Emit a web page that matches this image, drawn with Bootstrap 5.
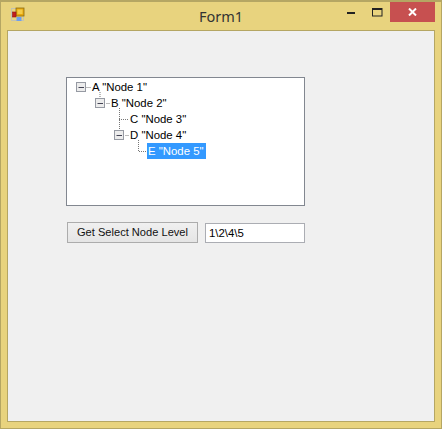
<!DOCTYPE html>
<html lang="en">
<head>
<meta charset="utf-8">
<title>Form1</title>
<link href="https://cdn.jsdelivr.net/npm/bootstrap@5.3.0/dist/css/bootstrap.min.css" rel="stylesheet">
<style>
html,body{background:#fff;margin:0;padding:0}
.winframe{width:442px;height:429px;background:#e8d37e;border:1px solid #b5a663;border-top-width:2px;font-family:"Liberation Sans",Arial,sans-serif;font-size:11.4px;color:#000}
.titlerow{height:28px;padding-left:9px}
.appicon{width:16px;height:16px;margin-top:5px}
.formtitle{left:0;right:0;top:5px;text-align:center;font-family:"Noto Sans",sans-serif;font-size:14.5px;line-height:18px;color:#333;pointer-events:none}
.winbtns{margin-right:6px;height:20px}
.winbtn{width:26px;height:20px;display:flex;align-items:center;justify-content:center}
.closebtn{width:45px;height:20px;background:#c75050;display:flex;align-items:center;justify-content:center}
.clientarea{margin:0 6px 7px 6px;height:392px;background:#f0f0f0;border:1px solid #b5a663;padding:46px 0 0 58px}
.treebox{width:239px;height:129px;background:#fff;border:1px solid #828790;padding-top:1px}
.treeart{left:0;top:0;width:237px;height:127px}
.treerow{height:16px;line-height:16px;white-space:nowrap;padding-left:25px}
.lv2{padding-left:44px}
.lv3{padding-left:63px}
.lv4{padding-left:80px}
.treesel{background:#3399ff;color:#fff;display:inline-block;padding:0 2px 0 1px;height:16px}
.actionrow{margin-top:16px;padding-left:1px;gap:7px}
.getbtn{width:131px;height:21px;padding:0;font-size:11.1px;line-height:19px;color:#111;background:linear-gradient(#f0f0f0,#e5e5e5);border:1px solid #acacac;border-radius:0}
.pathbox{width:100px;height:20px;margin-top:1px;padding:0 3px;font-size:11.4px;line-height:18px;background:#fff;border:1px solid #abadb3;border-radius:0}
</style>
</head>
<body>
<div class="winframe">
  <div class="titlerow d-flex justify-content-between position-relative">
    <svg class="appicon" viewBox="0 0 16 16" aria-hidden="true">
      <rect x="1.500" y="1.500" width="12" height="12" fill="none" stroke="#c2c2b4"/>
      <rect x="6" y="1" width="8" height="8" fill="#e8a80c" stroke="#8a6a12" stroke-width=".8"/>
      <rect x="7.500" y="2.500" width="5" height="4.500" fill="#f4cc48"/>
      <rect x="2.500" y="5" width="3.500" height="5" fill="#c41e1e" stroke="#8d1a1a" stroke-width=".6"/>
      <rect x="6.500" y="10" width="5" height="4" fill="#6f9fec"/>
    </svg>
    <div class="formtitle position-absolute">Form1</div>
    <div class="winbtns d-flex">
      <div class="winbtn">
        <svg width="9" height="3" viewBox="0 0 9 3" aria-hidden="true"><rect width="8" height="2" y="1" fill="#222"/></svg>
      </div>
      <div class="winbtn">
        <svg width="11" height="9" viewBox="0 0 11 9" aria-hidden="true"><rect x=".5" y=".5" width="9.500" height="7.500" fill="none" stroke="#222"/><rect width="10" height="2" fill="#222"/></svg>
      </div>
      <div class="closebtn">
        <svg width="9" height="8" viewBox="0 0 9 8" aria-hidden="true"><path d="M1 .5 8 7.500M8 .5 1 7.500" stroke="#fff" stroke-width="2" fill="none"/></svg>
      </div>
    </div>
  </div>
  <div class="clientarea">
    <div class="treebox position-relative">
      <svg class="treeart position-absolute" viewBox="0 0 237 127" aria-hidden="true">
        <g stroke="#777" stroke-dasharray="1 1" fill="none">
          <path d="M19.500 9.500H24M39.500 25.500H43M58.500 57.500H62M33 14V20M52.500 30V52M52 41.500H62M71.500 62V73.500H80"/>
        </g>
        <g fill="#ececec" stroke="#969aa3">
          <rect x="9.500" y="4.500" width="9" height="9"/>
          <rect x="28.500" y="20.500" width="9" height="9"/>
          <rect x="47.500" y="52.500" width="9" height="9"/>
        </g>
        <g stroke="#445" fill="none">
          <path d="M11.500 9.500H17M30.500 25.500H36M49.500 57.500H55"/>
        </g>
      </svg>
      <div class="treerow position-relative">A "Node 1"</div>
      <div class="treerow lv2 position-relative">B "Node 2"</div>
      <div class="treerow lv3 position-relative">C "Node 3"</div>
      <div class="treerow lv3 position-relative">D "Node 4"</div>
      <div class="treerow lv4 position-relative"><span class="treesel">E "Node 5"</span></div>
    </div>
    <div class="actionrow d-flex align-items-start">
      <button type="button" class="btn getbtn">Get Select Node Level</button>
      <div class="pathbox">1\2\4\5</div>
    </div>
  </div>
</div>
<script src="https://cdn.jsdelivr.net/npm/bootstrap@5.3.0/dist/js/bootstrap.bundle.min.js"></script>
</body>
</html>
